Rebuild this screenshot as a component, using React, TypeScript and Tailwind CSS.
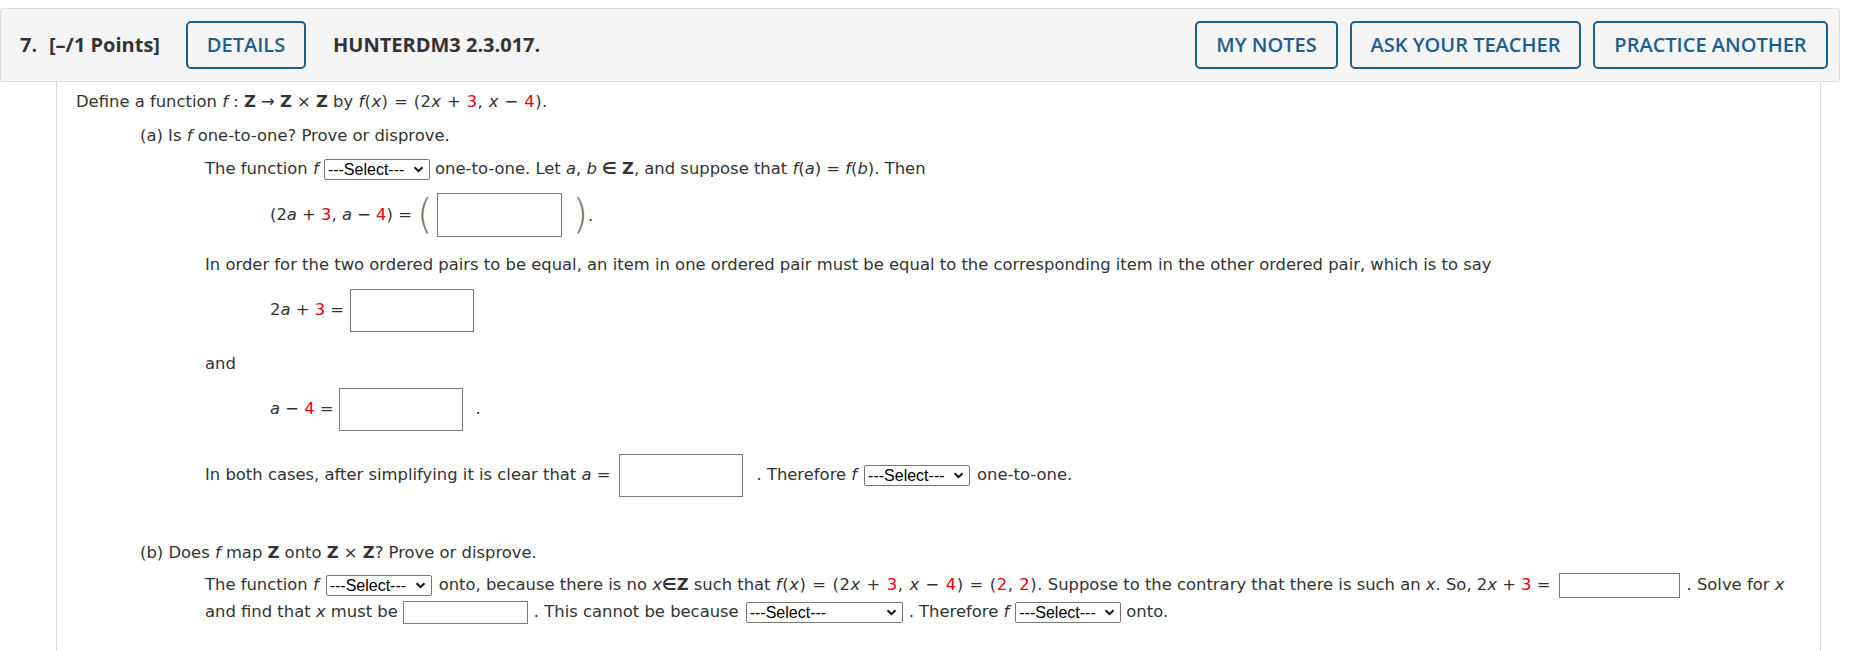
import React from "react";

const R = ({ children }: { children: React.ReactNode }) => (
  <span className="text-[#e60012]">{children}</span>
);

const I = ({ children }: { children: React.ReactNode }) => <i>{children}</i>;

function Select({ long = false, className = "" }: { long?: boolean; className?: string }) {
  return (
    <span
      className={`inline-flex h-[21px] items-center justify-between rounded-[2px] border border-[#767676] bg-white pl-[3px] pr-[5px] align-middle font-['Liberation_Sans',Arial,sans-serif] text-[16px] not-italic leading-none text-black ${
        long ? "w-[157px]" : "w-[106px]"
      } ${className}`}
    >
      <span>---Select---</span>
      <svg width="11" height="7" viewBox="0 0 11 7">
        <path d="M1.5 1.2l4 4 4-4" fill="none" stroke="#111" strokeWidth="2" />
      </svg>
    </span>
  );
}

function Box({ size = "lg", className = "" }: { size?: "lg" | "sm" | "xs"; className?: string }) {
  const dims =
    size === "lg" ? "h-[44px] w-[125px]" : size === "sm" ? "h-[25px] w-[121px]" : "h-[23px] w-[125px]";
  return <span className={`inline-block shrink-0 border border-[#7a7a7a] bg-white align-middle ${dims} ${className}`} />;
}

function Paren({ children }: { children: React.ReactNode }) {
  return (
    <span className="inline-block font-['DejaVu_Sans',sans-serif] text-[40px] font-extralight leading-none text-[#777]">
      {children}
    </span>
  );
}

function HeaderButton({ label, width }: { label: string; width: string }) {
  return (
    <button
      className={`flex h-12 items-center justify-center rounded-[5px] border-2 border-[#1d5d90] text-[20px] font-semibold text-[#1d5d90] ${width}`}
    >
      {label}
    </button>
  );
}

export default function App() {
  return (
    <div className="flex h-[651px] flex-col overflow-hidden bg-white pt-2">
      <header className="mr-[21px] flex h-[74px] shrink-0 items-center rounded-[3px] border border-[#dcdcdc] bg-[#f5f5f5] pl-[19px] pr-[11px] font-['Open_Sans',sans-serif] text-[#333]">
        <span className="w-[29px] text-[20px] font-bold">7.</span>
        <span className="w-[137px] text-[20px] font-bold">[–/1 Points]</span>
        <HeaderButton label="DETAILS" width="w-[120px]" />
        <span className="ml-[27px] text-[20px] font-bold">HUNTERDM3 2.3.017.</span>
        <div className="ml-auto flex gap-3">
          <HeaderButton label="MY NOTES" width="w-[143px]" />
          <HeaderButton label="ASK YOUR TEACHER" width="w-[231px]" />
          <HeaderButton label="PRACTICE ANOTHER" width="w-[235px]" />
        </div>
      </header>

      <div className="ml-[56px] mr-[40px] flex-1 border-l border-r border-[#dcdcdc] pl-[19px] font-['DejaVu_Sans',Verdana,sans-serif] text-[16.4px] text-[#333]">
        <div className="mt-[8px] leading-[24px] whitespace-nowrap">
          Define a function <I>f</I> : <b>Z</b> → <b>Z</b> × <b>Z</b> by{" "}
          <span className="tracking-[0.4px]">
            <I>f</I>(<I>x</I>) = (2<I>x</I> + <R>3</R>, <I>x</I> − <R>4</R>).
          </span>
        </div>

        <div className="pl-[64px]">
          <div className="mt-[10px] leading-[24px]">
            (a) Is <I>f</I> one-to-one? Prove or disprove.
          </div>

          <div className="pl-[65px]">
            <div className="mt-[9px] leading-[24px] whitespace-nowrap">
              The function <I>f</I> <Select /> one-to-one. Let <I>a</I>, <I>b</I> <b>∈</b> <b>Z</b>, and suppose that <I>f</I>(<I>a</I>) = <I>f</I>(<I>b</I>). Then
            </div>

            <div className="mt-[12px] flex h-[44px] items-center pl-[65px]">
              <span className="whitespace-nowrap">
                (2<I>a</I> + <R>3</R>, <I>a</I> − <R>4</R>) =
              </span>
              <span className="ml-[5px]">
                <Paren>(</Paren>
              </span>
              <Box className="ml-[5px]" />
              <span className="ml-[10px]">
                <Paren>)</Paren>
              </span>
              <span className="self-end pb-[8px]">.</span>
            </div>

            <div className="mt-[16px] leading-[24px] whitespace-nowrap">
              In order for the two ordered pairs to be equal, an item in one ordered pair must be equal to the corresponding item in the other ordered pair, which is to say
            </div>

            <div className="mt-[12px] flex h-[43px] items-center pl-[65px]">
              <span className="whitespace-nowrap">
                2<I>a</I> + <R>3</R> =
              </span>
              <Box className="ml-[6px] !h-[43px] !w-[124px]" />
            </div>

            <div className="mt-[20px] leading-[24px]">and</div>

            <div className="mt-[12px] flex h-[43px] items-center pl-[65px]">
              <span className="whitespace-nowrap">
                <I>a</I> − <R>4</R> =
              </span>
              <Box className="ml-[5px] !h-[43px] !w-[124px]" />
              <span className="ml-[13px]">.</span>
            </div>

            <div className="mt-[23px] flex h-[43px] items-center whitespace-nowrap">
              <span>
                In both cases, after simplifying it is clear that <I>a</I> =
              </span>
              <Box className="ml-[9px] !h-[43px] !w-[124px]" />
              <span className="ml-[13px]">
                . Therefore <I>f</I>
              </span>
              <Select className="ml-[7px]" />
              <span className="ml-[7px]">one-to-one.</span>
            </div>
          </div>

          <div className="mt-[44px] leading-[24px]">
            (b) Does <I>f</I> map <b>Z</b> onto <b>Z</b> × <b>Z</b>? Prove or disprove.
          </div>

          <div className="mt-[7px] pl-[65px]">
            <div className="flex h-[27px] items-center whitespace-nowrap">
              <span>
                The function <I>f</I>
              </span>
              <Select className="ml-[7px]" />
              <span className="ml-[7px]">
                onto, because there is no <I>x</I>
                <b>∈</b>
                <b>Z</b> such that{" "}
                <span className="tracking-[0.6px]">
                  <I>f</I>(<I>x</I>) = (2<I>x</I> + <R>3</R>, <I>x</I> − <R>4</R>) = (<R>2</R>, <R>2</R>)
                </span>
                . Suppose to the contrary that there is such an <I>x</I>. So, 2<I>x</I> + <R>3</R> =
              </span>
              <Box size="sm" className="ml-[8px]" />
              <span className="ml-[7px]">
                . Solve for <I>x</I>
              </span>
            </div>
            <div className="flex h-[27px] items-center whitespace-nowrap">
              <span>
                and find that <I>x</I> must be
              </span>
              <Box size="xs" className="ml-[5px]" />
              <span className="ml-[6px]">. This cannot be because</span>
              <Select long className="ml-[7px]" />
              <span className="ml-[6px]">
                . Therefore <I>f</I>
              </span>
              <Select className="ml-[6px]" />
              <span className="ml-[5px]">onto.</span>
            </div>
          </div>
        </div>
      </div>
    </div>
  );
}
